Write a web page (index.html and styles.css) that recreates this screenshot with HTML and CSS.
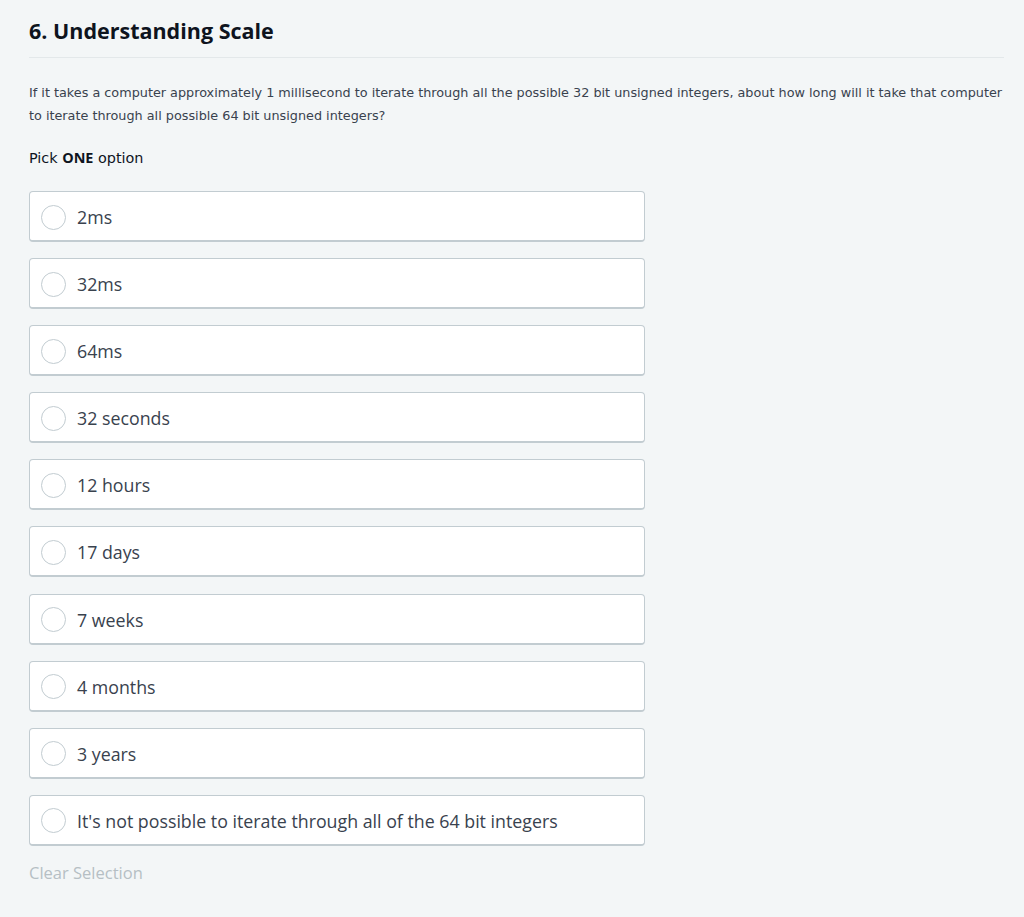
FILE: index.html
```html
<!DOCTYPE html>
<html lang="en">
<head>
    <meta charset="UTF-8">
    <meta name="viewport" content="width=device-width, initial-scale=1.0">
    <title>Understanding Scale</title>
    <link rel="stylesheet" href="styles.css">
</head>
<body>
    <div class="question">
        <h1>6. Understanding Scale</h1>
        <p class="prompt">If it takes a computer approximately 1 millisecond to iterate through all the possible 32 bit unsigned integers, about how long will it take that computer to iterate through all possible 64 bit unsigned integers?</p>
        <p class="pick">Pick <b>ONE</b> option</p>
        <div class="options">
            <label class="option"><span class="radio"></span>2ms</label>
            <label class="option"><span class="radio"></span>32ms</label>
            <label class="option"><span class="radio"></span>64ms</label>
            <label class="option"><span class="radio"></span>32 seconds</label>
            <label class="option"><span class="radio"></span>12 hours</label>
            <label class="option"><span class="radio"></span>17 days</label>
            <label class="option"><span class="radio"></span>7 weeks</label>
            <label class="option"><span class="radio"></span>4 months</label>
            <label class="option"><span class="radio"></span>3 years</label>
            <label class="option"><span class="radio"></span>It's not possible to iterate through all of the 64 bit integers</label>
        </div>
        <div class="clear">Clear Selection</div>
    </div>
</body>
</html>
```

FILE: styles.css
```css
html, body {
    margin: 0;
    padding: 0;
    background-color: #f3f6f7;
}
body {
    font-family: 'Open Sans', sans-serif;
    color: #39424e;
}
.question {
    padding: 14px 20px 0 29px;
}
h1 {
    font-size: 21.5px;
    font-weight: 700;
    color: #0e141e;
    margin: 0;
    padding-bottom: 9px;
    border-bottom: 1px solid #e3e8ea;
    line-height: 34px;
}
.prompt {
    font-family: 'DejaVu Sans', Verdana, sans-serif;
    font-size: 12.8px;
    line-height: 23px;
    color: #39424e;
    margin: 23px 0 0 0;
}
.pick {
    font-family: 'DejaVu Sans', Verdana, sans-serif;
    font-size: 14.4px;
    color: #0e141e;
    margin: 21px 0 0 0;
    line-height: 20px;
}
.pick b {
    font-family: 'Open Sans', sans-serif;
    font-weight: 700;
}
.options {
    display: flex;
    flex-direction: column;
    gap: 16.1px;
    margin-top: 23px;
    width: 616px;
}
.option {
    display: flex;
    align-items: center;
    height: 51px;
    box-sizing: border-box;
    background-color: #fff;
    border: 1px solid #c2ccd1;
    border-bottom-width: 2px;
    border-radius: 4px;
    padding: 2px 0 0 11px;
    font-size: 17.8px;
    color: #39424e;
}
.radio {
    width: 25px;
    height: 25px;
    box-sizing: border-box;
    border: 1px solid #c2ccd1;
    border-radius: 50%;
    margin-right: 11px;
    flex-shrink: 0;
}
.clear {
    margin-top: 15px;
    font-size: 16.5px;
    color: #b6bfc4;
}
```
